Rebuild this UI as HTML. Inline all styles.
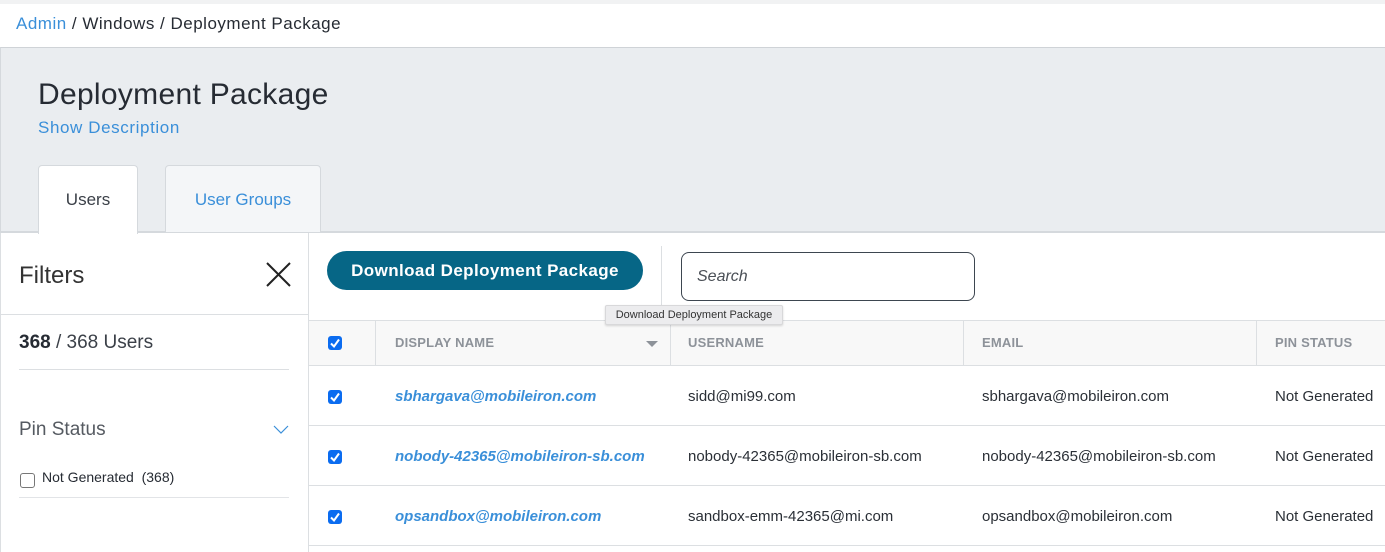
<!DOCTYPE html>
<html><head><style>
*{box-sizing:border-box;margin:0;padding:0}
body{width:1385px;height:552px;overflow:hidden;background:#fff;font-family:"Liberation Sans",Arial,sans-serif;position:relative;color:#262b33}
.a{position:absolute}
.cb{position:absolute;width:14px;height:14px;border-radius:3px;background:#0b6cf0}
.cb svg{position:absolute;left:0;top:0}
.th{position:absolute;top:335px;font-size:13px;font-weight:bold;color:#8d9299;letter-spacing:.2px}
.link{color:#3a8fd9;font-style:italic;font-weight:bold;font-size:15px}
.td{font-size:15px;color:#2a2f36}
</style></head><body>
<div class="a" style="left:0;top:0;width:1385px;height:4px;background:#f1f2f3"></div>
<div class="a" style="left:16px;top:14px;font-size:17px;letter-spacing:.5px"><span style="color:#3a8fd9">Admin</span> / Windows / Deployment Package</div>
<div class="a" style="left:0;top:47px;width:1385px;height:186px;background:#eaedf0;border-top:1px solid #cfd3d7;border-bottom:2px solid #d5d9dd;border-left:1px solid #d5d9dd"></div>
<div class="a" style="left:38px;top:78px;font-size:30px;letter-spacing:.3px;color:#262b33">Deployment Package</div>
<div class="a" style="left:38px;top:118px;font-size:17px;letter-spacing:.6px;color:#3a8fd9">Show Description</div>
<div class="a" style="left:38px;top:165px;width:100px;height:69px;background:#fff;border:1px solid #d5d9dd;border-bottom:none;border-radius:4px 4px 0 0;text-align:center;padding-top:24px;font-size:17px;color:#3b4048">Users</div>
<div class="a" style="left:165px;top:165px;width:156px;height:67px;background:#f4f6f8;border:1px solid #d5d9dd;border-bottom:none;border-radius:4px 4px 0 0;text-align:center;padding-top:24px;font-size:17px;color:#3a8fd9">User Groups</div>
<div class="a" style="left:0;top:233px;width:309px;height:319px;border-right:1px solid #dcdfe2;border-left:1px solid #dcdfe2"></div>
<div class="a" style="left:19px;top:262px;font-size:24px;font-weight:300;color:#333">Filters</div>
<svg class="a" style="left:266px;top:262px" width="25" height="25"><path d="M1 1L24 24M24 1L1 24" stroke="#222" stroke-width="2"/></svg>
<div class="a" style="left:0;top:314px;width:309px;height:1px;background:#dcdfe2"></div>
<div class="a" style="left:19px;top:332px;font-size:19px;color:#3b4048"><b style="color:#262b33">368</b> / 368 Users</div>
<div class="a" style="left:19px;top:369px;width:270px;height:1px;background:#dcdfe2"></div>
<div class="a" style="left:19px;top:419px;font-size:19px;color:#555a61">Pin Status</div>
<svg class="a" style="left:273px;top:425px" width="16" height="10"><path d="M1 1L8 8L15 1" stroke="#3a8fd9" fill="none" stroke-width="1.2"/></svg>
<div class="a" style="left:20px;top:473px;width:15px;height:15px;border:1px solid #777;border-radius:3px"></div>
<div class="a" style="left:42px;top:469px;font-size:14px;color:#262b33">Not Generated&nbsp; (368)</div>
<div class="a" style="left:19px;top:497px;width:270px;height:1px;background:#e2e4e7"></div>
<div class="a" style="left:327px;top:251px;width:316px;height:39px;background:#066686;border-radius:20px;color:#fff;font-weight:bold;font-size:17px;letter-spacing:.4px;text-align:center;line-height:39px">Download Deployment Package</div>
<div class="a" style="left:661px;top:246px;width:1px;height:60px;background:#dcdfe2"></div>
<div class="a" style="left:681px;top:252px;width:294px;height:49px;border:1px solid #3d4650;border-radius:8px;padding:15px 0 0 15px;font-size:16px;font-style:italic;color:#4a4f56">Search</div>
<div class="a" style="left:309px;top:320px;width:1076px;height:46px;background:#f8f8f8;border-top:1px solid #dcdfe2;border-bottom:1px solid #dcdfe2"></div>
<div class="a" style="left:375px;top:320px;width:1px;height:46px;background:#dcdfe2"></div>
<div class="a" style="left:670px;top:320px;width:1px;height:46px;background:#dcdfe2"></div>
<div class="a" style="left:963px;top:320px;width:1px;height:46px;background:#dcdfe2"></div>
<div class="a" style="left:1256px;top:320px;width:1px;height:46px;background:#dcdfe2"></div>
<div class="a" style="left:605px;top:305px;width:178px;height:20px;background:#ececee;border:1px solid #d8d8da;border-radius:2px;font-size:11px;color:#333;text-align:center;line-height:18px;box-shadow:0 1px 2px rgba(0,0,0,.15)">Download Deployment Package</div>
<div class="th" style="left:395px">DISPLAY NAME</div>
<svg class="a" style="left:646px;top:341px" width="12" height="6"><path d="M0 0H12L6 6Z" fill="#8d9299"/></svg>
<div class="th" style="left:688px">USERNAME</div>
<div class="th" style="left:982px">EMAIL</div>
<div class="th" style="left:1275px">PIN STATUS</div>
<div class="a" style="left:309px;top:425px;width:1076px;height:1px;background:#dcdfe2"></div>
<div class="a" style="left:309px;top:485px;width:1076px;height:1px;background:#dcdfe2"></div>
<div class="a" style="left:309px;top:545px;width:1076px;height:1px;background:#dcdfe2"></div>
<div class="cb" style="left:328px;top:336px"><svg width="14" height="14"><path d="M3 7.5L6 10.5L11 3.5" stroke="#fff" stroke-width="2" fill="none"/></svg></div>
<div class="cb" style="left:328px;top:390px"><svg width="14" height="14"><path d="M3 7.5L6 10.5L11 3.5" stroke="#fff" stroke-width="2" fill="none"/></svg></div>
<div class="cb" style="left:328px;top:450px"><svg width="14" height="14"><path d="M3 7.5L6 10.5L11 3.5" stroke="#fff" stroke-width="2" fill="none"/></svg></div>
<div class="cb" style="left:328px;top:510px"><svg width="14" height="14"><path d="M3 7.5L6 10.5L11 3.5" stroke="#fff" stroke-width="2" fill="none"/></svg></div>
<div class="a link" style="left:395px;top:388px">sbhargava@mobileiron.com</div>
<div class="a td" style="left:688px;top:388px">sidd@mi99.com</div>
<div class="a td" style="left:982px;top:388px">sbhargava@mobileiron.com</div>
<div class="a td" style="left:1275px;top:388px">Not Generated</div>
<div class="a link" style="left:395px;top:448px">nobody-42365@mobileiron-sb.com</div>
<div class="a td" style="left:688px;top:448px">nobody-42365@mobileiron-sb.com</div>
<div class="a td" style="left:982px;top:448px">nobody-42365@mobileiron-sb.com</div>
<div class="a td" style="left:1275px;top:448px">Not Generated</div>
<div class="a link" style="left:395px;top:508px">opsandbox@mobileiron.com</div>
<div class="a td" style="left:688px;top:508px">sandbox-emm-42365@mi.com</div>
<div class="a td" style="left:982px;top:508px">opsandbox@mobileiron.com</div>
<div class="a td" style="left:1275px;top:508px">Not Generated</div>
</body></html>
